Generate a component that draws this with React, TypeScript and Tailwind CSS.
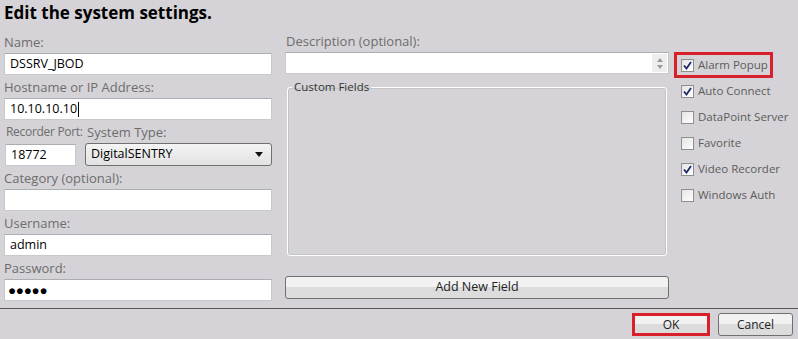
import type { ReactNode } from 'react';

// ----------------------------------------------------------------------------
// Edit system settings dialog
// ----------------------------------------------------------------------------

const labelBase = "h-[23px] flex items-end pb-[3px] leading-[16px] text-[#6d6d6d] whitespace-nowrap";
const labelCls = labelBase + " text-[13px]";
const inputCls =
  "h-[22px] bg-white border border-[#c9c8cc] border-t-[#abadb3] flex items-center pl-[5px] text-[12.5px] text-black whitespace-nowrap";

function Field({ label, children }: { label: string; children: ReactNode }) {
  return (
    <div className="flex flex-col">
      <div className={labelCls}>{label}</div>
      {children}
    </div>
  );
}

function Check({ label, checked }: { label: string; checked: boolean }) {
  return (
    <span className="flex items-center gap-[4px] whitespace-nowrap">
      <span className="w-[13px] h-[13px] shrink-0 border border-[#8e8f8f] bg-gradient-to-br from-[#e4e4e4] to-[#ffffff] flex items-center justify-center">
        {checked && (
          <svg width="9" height="9" viewBox="0 0 9 9">
            <path d="M1 4.5 L3.5 7.5 L8 1" fill="none" stroke="#1d2a6e" strokeWidth="1.8" />
          </svg>
        )}
      </span>
      <span className="text-[11.5px] leading-[16px] text-[#5c5c5c]">{label}</span>
    </span>
  );
}

const checks = [
  { label: 'Alarm Popup', checked: true },
  { label: 'Auto Connect', checked: true },
  { label: 'DataPoint Server', checked: false },
  { label: 'Favorite', checked: false },
  { label: 'Video Recorder', checked: true },
  { label: 'Windows Auth', checked: false },
];

const btnCls =
  "rounded-[3px] border border-[#707070] bg-gradient-to-b from-[#f2f2f2] from-50% to-[#dcdcdc] to-50% text-[#222] flex items-center justify-center";

export default function App() {
  return (
    <div className="w-[798px] h-[339px] bg-[#d5d3d7] flex flex-col font-['Open_Sans','Noto_Sans',sans-serif] overflow-hidden">
      <h1 className="h-[30px] pl-[4px] pt-[1px] text-[17px] leading-[24px] font-bold text-black">
        Edit the system settings.
      </h1>

      <div className="flex h-[278px]">
        {/* ---- Left column ---- */}
        <div className="ml-[4px] w-[268px] flex flex-col">
          <Field label="Name:">
            <div className={inputCls}>DSSRV_JBOD</div>
          </Field>
          <Field label="Hostname or IP Address:">
            <div className={inputCls}>
              10.10.10.10
              <span className="ml-[1px] w-px h-[15px] bg-black" />
            </div>
          </Field>
          <div className="flex">
            <div className="flex flex-col w-[71px] ml-[1px]">
              <div className={labelBase + " pl-[1px] text-[12px] tracking-[-0.3px]"}>Recorder Port:</div>
              <div className={inputCls + " mt-[1px]"}>18772</div>
            </div>
            <div className="flex flex-col ml-[9px] flex-1">
              <div className={labelCls + " pl-[2px]"}>System Type:</div>
              <div className="h-[23px] rounded-[3px] border border-[#707070] bg-gradient-to-b from-[#f4f4f4] to-[#e2e2e2] flex items-center pl-[5px] pr-[8px] text-[12.5px] text-black">
                <span className="flex-1">DigitalSENTRY</span>
                <svg width="8" height="5" viewBox="0 0 8 5">
                  <path d="M0 0 H8 L4 5 Z" fill="#111" />
                </svg>
              </div>
            </div>
          </div>
          <Field label="Category (optional):">
            <div className={inputCls} />
          </Field>
          <Field label="Username:">
            <div className={inputCls}>admin</div>
          </Field>
          <Field label="Password:">
            <div className="h-[22px] bg-white border border-[#c9c8cc] border-t-[#abadb3] flex items-center pl-[3px] text-[13.5px] tracking-[-0.3px] text-black">
              ●●●●●
            </div>
          </Field>
        </div>

        {/* ---- Middle column ---- */}
        <div className="ml-[13px] w-[384px] flex flex-col">
          <div className="h-[22px] flex items-end pb-[3px] pl-[1px] text-[13px] leading-[16px] text-[#6d6d6d] whitespace-nowrap">
            Description (optional):
          </div>
          <div className="h-[22px] bg-white border border-[#c9c8cc] border-t-[#abadb3] flex justify-end">
            <div className="w-[15px] mr-[1px] my-[1px] bg-[#eeeeee] flex flex-col items-center justify-center gap-[3px]">
              <svg width="6" height="4" viewBox="0 0 6 4">
                <path d="M0 4 H6 L3 0 Z" fill="#9a9a9a" />
              </svg>
              <svg width="6" height="4" viewBox="0 0 6 4">
                <path d="M0 0 H6 L3 4 Z" fill="#9a9a9a" />
              </svg>
            </div>
          </div>
          <fieldset className="mt-[5px] mx-[2px] h-[177px] border border-white rounded-[3px] shadow-[inset_0_0_0_1px_#c4c3c7]">
            <legend className="ml-[4px] px-[2px] text-[11.5px] leading-[16px] text-[#333]">Custom Fields</legend>
          </fieldset>
          <button className={btnCls + " mt-[20px] h-[23px] text-[12.5px]"}>Add New Field</button>
        </div>

        {/* ---- Right column ---- */}
        <div className="ml-[5px] pt-[22px] flex flex-col">
          {checks.map((c, i) => (
            <div
              key={c.label}
              className={
                "h-[26px] pl-[4px] flex items-center border-[3px] " +
                (i === 0 ? "w-[99px] border-[#d8202b]" : "border-transparent")
              }
            >
              <Check label={c.label} checked={c.checked} />
            </div>
          ))}
        </div>
      </div>

      {/* ---- Footer ---- */}
      <div className="flex-1 border-t border-[#555555] flex justify-end items-start pt-[4px] pr-[5px] gap-[8px]">
        <div className="w-[78px] h-[23px] border-[3px] border-[#d8202b] flex">
          <button className={btnCls + " flex-1 rounded-none border-0 text-[12px]"}>OK</button>
        </div>
        <button className={btnCls + " w-[75px] h-[23px] text-[12px]"}>Cancel</button>
      </div>
    </div>
  );
}
